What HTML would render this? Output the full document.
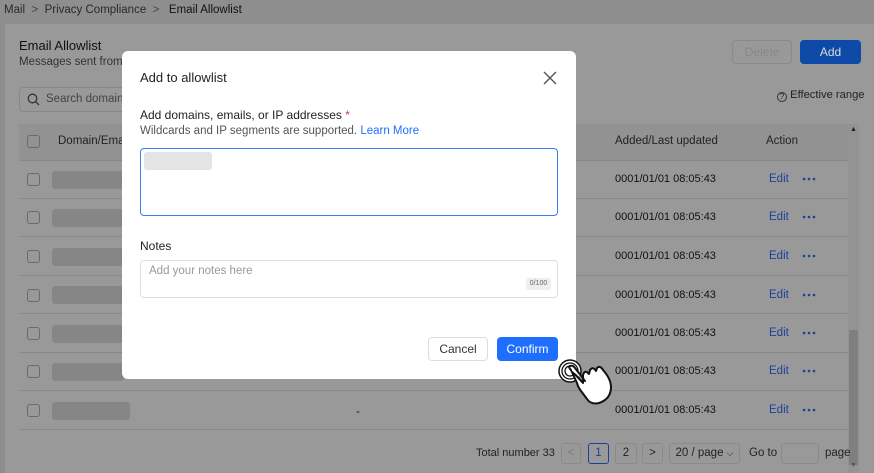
<!DOCTYPE html>
<html><head><meta charset="utf-8"><style>
*{box-sizing:border-box;margin:0;padding:0}
body{width:874px;height:473px;overflow:hidden;background:#8e8e8e;font-family:"Liberation Sans",Arial,sans-serif;position:relative;color:#1a1a1a;font-size:12px}
.a{position:absolute}
.bc{top:4px;left:4px;font-size:11.5px;color:#2a2a2a}
.panel{left:5px;top:24px;width:869px;height:449px;background:#999}
.t{color:#111}
.row{position:absolute;left:19px;width:829px;height:38px;border-bottom:1px solid #888}
.cb{position:absolute;left:8px;width:13px;height:13px;border:1px solid #6a6a6a;border-radius:3px}
.sk{position:absolute;left:33px;width:72px;height:18px;background:#868686;border-radius:3px}
.dt{position:absolute;left:596px;font-size:11px;color:#111}
.ed{position:absolute;left:750px;color:#1c3f9a;font-size:11.5px}
.dots{position:absolute;left:783px}
.modal{left:122px;top:51px;width:454px;height:328px;background:#fff;border-radius:6px}
.pg{position:absolute;top:443px;height:21px;border:1px solid #8a8a8a;border-radius:3px;text-align:center;line-height:19px;color:#222;font-size:11.5px}
</style></head><body>
<div class="a bc">Mail &nbsp;<span style="color:#444">&gt;</span>&nbsp; Privacy Compliance &nbsp;<span style="color:#444">&gt;</span>&nbsp;&nbsp; <span style="color:#111">Email Allowlist</span></div>
<div class="a panel"></div>
<div class="a t" style="left:19px;top:38px;font-size:13px">Email Allowlist</div>
<div class="a" style="left:19px;top:56px;color:#333;font-size:11.5px;white-space:nowrap">Messages sent from th</div>
<div class="a" style="left:19px;top:87px;width:110px;height:25px;border:1px solid #888;border-radius:4px"></div>
<svg class="a" style="left:27px;top:93px" width="13" height="13" viewBox="0 0 13 13"><circle cx="5.5" cy="5.5" r="4.3" fill="none" stroke="#333" stroke-width="1.3"/><path d="M8.7 8.7L12 12" stroke="#333" stroke-width="1.3"/></svg>
<div class="a" style="left:46px;top:93px;color:#444;font-size:11.5px">Search domain,</div>
<div class="a" style="left:732px;top:40px;width:60px;height:24px;border:1px solid #8a8a8a;border-radius:4px;color:#888;text-align:center;line-height:22px">Delete</div>
<div class="a" style="left:800px;top:40px;width:61px;height:24px;background:#0d4aa8;border-radius:4px;color:#ddd;text-align:center;line-height:24px">Add</div>
<div class="a" style="left:777px;top:89px;color:#222;font-size:11.2px"><span style="display:inline-block;width:10px;height:10px;border:1px solid #333;border-radius:50%;font-size:8px;line-height:8px;text-align:center;vertical-align:-1px">?</span> Effective range</div>
<div class="a" style="left:19px;top:124px;width:829px;height:37px;background:#929292;border-bottom:1px solid #888"></div>
<div class="cb" style="left:27px;top:135px"></div>
<div class="a" style="left:58px;top:135px;color:#222;font-size:11.5px">Domain/Emai</div>
<div class="a" style="left:615px;top:135px;color:#222;font-size:11.5px">Added/Last updated</div>
<div class="a" style="left:766px;top:135px;color:#222;font-size:11.5px">Action</div>
<div class="a" style="left:848px;top:124px;width:11px;height:349px;background:#939393"></div>
<div class="a" style="left:849px;top:330px;width:9px;height:135px;background:#7f7f7f"></div>
<div class="a" style="left:850px;top:126px;font-size:7px;color:#222">▲</div>
<div class="a" style="left:850px;top:462px;font-size:7px;color:#555">▼</div>

<svg width="0" height="0" style="position:absolute"><defs><g id="d"><circle cx="2" cy="2" r="1.3" fill="#1c3f9a"/><circle cx="7" cy="2" r="1.3" fill="#1c3f9a"/><circle cx="12" cy="2" r="1.3" fill="#1c3f9a"/></g></defs></svg>

<div class="row" style="top:161px"><div class="cb" style="top:12px"></div><div class="sk" style="top:10px"></div><div class="dt" style="top:12px">0001/01/01 08:05:43</div><div class="ed" style="top:12px">Edit</div><svg class="dots" style="top:16px" width="14" height="4"><use href="#d"/></svg></div>
<div class="row" style="top:199px"><div class="cb" style="top:12px"></div><div class="sk" style="top:10px"></div><div class="dt" style="top:12px">0001/01/01 08:05:43</div><div class="ed" style="top:12px">Edit</div><svg class="dots" style="top:16px" width="14" height="4"><use href="#d"/></svg></div>
<div class="row" style="top:238px"><div class="cb" style="top:12px"></div><div class="sk" style="top:10px"></div><div class="dt" style="top:12px">0001/01/01 08:05:43</div><div class="ed" style="top:12px">Edit</div><svg class="dots" style="top:16px" width="14" height="4"><use href="#d"/></svg></div>
<div class="row" style="top:276px"><div class="cb" style="top:13px"></div><div class="sk" style="top:10px"></div><div class="dt" style="top:13px">0001/01/01 08:05:43</div><div class="ed" style="top:13px">Edit</div><svg class="dots" style="top:17px" width="14" height="4"><use href="#d"/></svg></div>
<div class="row" style="top:315px"><div class="cb" style="top:12px"></div><div class="sk" style="top:10px"></div><div class="dt" style="top:12px">0001/01/01 08:05:43</div><div class="ed" style="top:12px">Edit</div><svg class="dots" style="top:16px" width="14" height="4"><use href="#d"/></svg></div>
<div class="row" style="top:353px"><div class="cb" style="top:12px"></div><div class="sk" style="top:10px"></div><div class="dt" style="top:12px">0001/01/01 08:05:43</div><div class="ed" style="top:12px">Edit</div><svg class="dots" style="top:16px" width="14" height="4"><use href="#d"/></svg></div>
<div class="row" style="top:392px"><div class="cb" style="top:12px"></div><div class="sk" style="top:10px;width:78px"></div><div class="a" style="left:337px;top:12px;color:#222">-</div><div class="dt" style="top:12px">0001/01/01 08:05:43</div><div class="ed" style="top:12px">Edit</div><svg class="dots" style="top:16px" width="14" height="4"><use href="#d"/></svg></div>

<div class="a" style="left:476px;top:447px;color:#222;font-size:11px">Total number 33</div>
<div class="pg" style="left:561px;width:20px;color:#777">&lt;</div>
<div class="pg" style="left:588px;width:21px;border-color:#1c3f9a;color:#1c3f9a">1</div>
<div class="pg" style="left:615px;width:22px">2</div>
<div class="pg" style="left:642px;width:21px">&gt;</div>
<div class="pg" style="left:669px;width:71px">20 / page <span style="font-size:9px">⌵</span></div>
<div class="a" style="left:749px;top:447px;color:#222;font-size:11.5px">Go to</div>
<div class="pg" style="left:781px;width:38px"></div>
<div class="a" style="left:825px;top:447px;color:#222;font-size:11.5px">page</div>

<div class="a modal">
  <div class="a" style="left:18px;top:19px;font-size:13px;color:#222">Add to allowlist</div>
  <svg class="a" style="left:421px;top:20px" width="14" height="14" viewBox="0 0 14 14"><path d="M1 1L13 13M13 1L1 13" stroke="#555" stroke-width="1.4"/></svg>
  <div class="a" style="left:18px;top:57px;font-size:12px;color:#222">Add domains, emails, or IP addresses <span style="color:#e34">*</span></div>
  <div class="a" style="left:18px;top:74px;font-size:11.5px;color:#555">Wildcards and IP segments are supported. <span style="color:#1e6fff">Learn More</span></div>
  <div class="a" style="left:18px;top:97px;width:418px;height:68px;border:1px solid #3b7ff5;border-radius:4px"></div>
  <div class="a" style="left:22px;top:101px;width:68px;height:18px;background:#e4e4e4;border-radius:3px"></div>
  <div class="a" style="left:18px;top:188px;font-size:12px;color:#222">Notes</div>
  <div class="a" style="left:18px;top:209px;width:418px;height:38px;border:1px solid #ddd;border-radius:4px"></div>
  <div class="a" style="left:27px;top:214px;font-size:11.5px;color:#999">Add your notes here</div>
  <div class="a" style="left:404px;top:227px;width:25px;height:12px;background:#eee;border-radius:3px;font-size:7px;color:#666;text-align:center;line-height:12px">0/100</div>
  <div class="a" style="left:306px;top:286px;width:60px;height:24px;border:1px solid #ddd;border-radius:4px;text-align:center;line-height:22px;color:#333">Cancel</div>
  <div class="a" style="left:375px;top:286px;width:61px;height:24px;background:#1e6fff;border-radius:4px;text-align:center;line-height:24px;color:#fff">Confirm</div>
</div>

<svg class="a" style="left:555px;top:357px" width="62" height="50" viewBox="0 0 62 50">
  <circle cx="15" cy="14" r="11" fill="#fff" stroke="#111" stroke-width="1.5"/>
  <circle cx="15" cy="14" r="8" fill="none" stroke="#111" stroke-width="1.3"/>
  <circle cx="15" cy="14" r="5" fill="none" stroke="#111" stroke-width="1.3"/>
  <path d="M16 13 L28 26 L28 18 Q30 12 34 17 L35 13 Q38 9 41 14 L42 11 Q45 8 48 13 Q56 22 56 30 Q56 42 44 46 Q36 48 32 42 L26 34 Q23 30 22 26 Z" fill="#fff" stroke="#111" stroke-width="2" stroke-linejoin="round"/>
  <path d="M16 13 Q13 10 15 9 Q18 8 20 11 L30 24" fill="#fff" stroke="#111" stroke-width="2" stroke-linecap="round"/>
</svg>
</body></html>
